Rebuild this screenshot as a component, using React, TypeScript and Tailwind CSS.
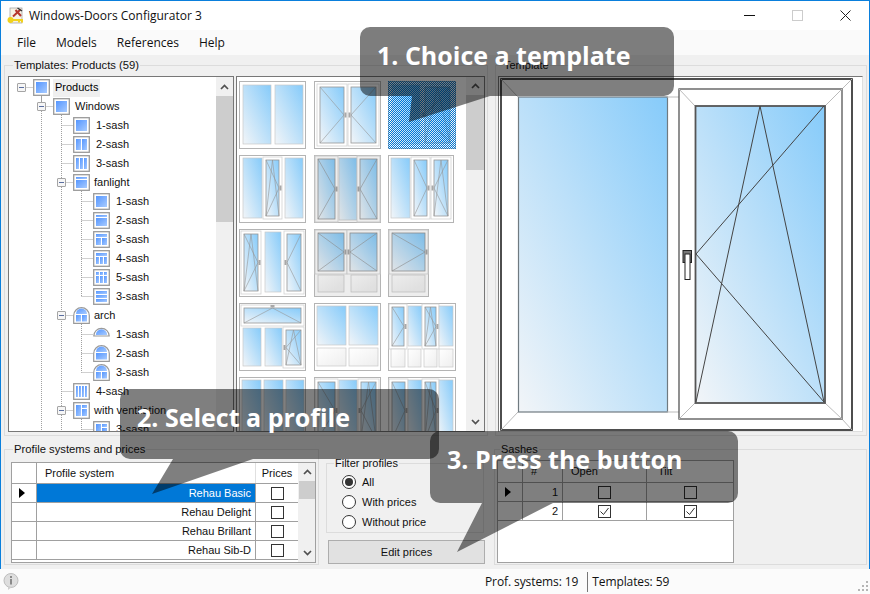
import React from "react";

type R = [number, number, number, number];
const sans = "font-['Liberation_Sans',Arial,sans-serif]";

/* ---------- tree ---------- */
const tree: { t: string; l: number; m?: boolean; k: string }[] = [
  { t: "Products", l: 0, m: true, k: "one" },
  { t: "Windows", l: 1, m: true, k: "one" },
  { t: "1-sash", l: 2, k: "one" },
  { t: "2-sash", l: 2, k: "v2" },
  { t: "3-sash", l: 2, k: "v3" },
  { t: "fanlight", l: 2, m: true, k: "fan" },
  { t: "1-sash", l: 3, k: "one" },
  { t: "2-sash", l: 3, k: "fan" },
  { t: "3-sash", l: 3, k: "f2" },
  { t: "4-sash", l: 3, k: "f3" },
  { t: "5-sash", l: 3, k: "f33" },
  { t: "3-sash", l: 3, k: "h3" },
  { t: "arch", l: 2, m: true, k: "arch3" },
  { t: "1-sash", l: 3, k: "arch1" },
  { t: "2-sash", l: 3, k: "arch2" },
  { t: "3-sash", l: 3, k: "arch3" },
  { t: "4-sash", l: 2, k: "v4" },
  { t: "with ventilation", l: 2, m: true, k: "vent" },
  { t: "3-sash", l: 3, k: "vent" },
];

const iconRects: Record<string, R[]> = {
  one: [[3, 3, 11, 11]],
  v2: [[3, 3, 5, 11], [9, 3, 5, 11]],
  v3: [[3, 3, 3, 11], [7, 3, 3, 11], [11, 3, 3, 11]],
  v4: [[3, 3, 2, 11], [6, 3, 2, 11], [9, 3, 2, 11], [12, 3, 2, 11]],
  fan: [[3, 3, 11, 2], [3, 6, 11, 8]],
  f2: [[3, 3, 11, 3], [3, 7, 5, 7], [9, 7, 5, 7]],
  f3: [[3, 3, 11, 3], [3, 7, 3, 7], [7, 7, 3, 7], [11, 7, 3, 7]],
  f33: [[3, 3, 3, 3], [7, 3, 3, 3], [11, 3, 3, 3], [3, 7, 3, 7], [7, 7, 3, 7], [11, 7, 3, 7]],
  h3: [[3, 3, 11, 3], [3, 7, 11, 3], [3, 11, 11, 3]],
  vent: [[3, 3, 5, 11], [9, 3, 5, 3], [9, 7, 5, 7]],
};

function TreeIcon({ k }: { k: string }) {
  if (k.startsWith("arch")) {
    return (
      <svg width="17" height="17" viewBox="0 0 17 17" className="relative shrink-0">
        {k === "arch1" ? (
          <>
            <path d="M.8 10 A7.7 7.7 0 0 1 16.2 10 Z" fill="#fff" stroke="#9a9a9a" strokeWidth="1.2" />
            <path d="M2.8 9 A5.7 5.7 0 0 1 14.2 9 Z" fill="url(#tb)" />
          </>
        ) : (
          <>
            <path d="M.7 16.3 V8.5 A7.8 7.8 0 0 1 16.3 8.5 V16.3 Z" fill="#fff" stroke="#9a9a9a" strokeWidth="1.2" />
            <path d="M3 7 A5.5 5.5 0 0 1 14 7 Z" fill="url(#tb)" />
            {k === "arch2" ? (
              <rect x="3" y="8" width="11" height="6.5" fill="url(#tb)" />
            ) : (
              <>
                <rect x="3" y="8" width="5" height="6.5" fill="url(#tb)" />
                <rect x="9" y="8" width="5" height="6.5" fill="url(#tb)" />
              </>
            )}
          </>
        )}
      </svg>
    );
  }
  return (
    <svg width="17" height="17" viewBox="0 0 17 17" className="relative shrink-0">
      <rect x=".7" y=".7" width="15.6" height="15.6" fill="#fff" stroke="#9a9a9a" strokeWidth="1.3" />
      {iconRects[k].map((r, i) => (
        <rect key={i} x={r[0]} y={r[1]} width={r[2]} height={r[3]} fill="url(#tb)" />
      ))}
    </svg>
  );
}

function TreeLines() {
  const d: string[] = [];
  tree.forEach((n, i) => {
    const y = 10.5 + i * 19;
    const x = 12.5 + n.l * 20;
    d.push(`M${x} ${y}H${x + 12}`);
    if (n.l > 0) {
      let j = i - 1;
      while (j >= 0 && tree[j].l >= n.l) j--;
      d.push(`M${x} ${j * 19 + 19}V${y}`);
    }
  });
  d.push("M32.5 20V356", "M52.5 40V356", "M72.5 340V356");
  return (
    <svg className="absolute left-0 top-0" width="200" height="356">
      <path d={d.join("")} stroke="#a0a0a0" strokeDasharray="1 1" fill="none" />
    </svg>
  );
}

function TreeRow({ t, l, m, k }: { t: string; l: number; m?: boolean; k: string }) {
  const pad = ["pl-[8px]", "pl-[28px]", "pl-[48px]", "pl-[68px]"][l];
  return (
    <div className={`relative flex h-[19px] items-center ${pad}`}>
      <div className="flex w-[16px] shrink-0 items-center">
        {m && (
          <div className="relative flex h-[9px] w-[9px] items-center justify-center rounded-[1px] border border-[#a5a5a5] bg-[#f6f6f6]">
            <div className="h-px w-[5px] bg-[#5a6ea0]" />
          </div>
        )}
      </div>
      <TreeIcon k={k} />
      {l === 0 ? (
        <span className="ml-[3px] flex h-[18px] items-center bg-[#efefef] px-[2px] text-black">{t}</span>
      ) : (
        <span className={`${m && l === 2 ? "ml-[4px]" : m ? "ml-[5px]" : "ml-[6px]"} whitespace-nowrap text-[#111]`}>{t}</span>
      )}
    </div>
  );
}

/* ---------- thumbnails ---------- */
type P = { r: R; y: "f" | "t" | "k" | "h" | "p"; side?: "l" | "r" };
const f = (x: number, y: number, w: number, h: number): P => ({ r: [x, y, w, h], y: "f" });
const pn = (x: number, y: number, w: number, h: number): P => ({ r: [x, y, w, h], y: "p" });
const t = (x: number, y: number, w: number, h: number, side: "l" | "r" = "r"): P => ({ r: [x, y, w, h], y: "t", side });
const k = (x: number, y: number, w: number, h: number, side: "l" | "r" = "r"): P => ({ r: [x, y, w, h], y: "k", side });
const hh = (x: number, y: number, w: number, h: number): P => ({ r: [x, y, w, h], y: "h" });

const thumbs: { w: number; dim?: boolean; sel?: boolean; panes: P[] }[] = [
  { w: 67, panes: [f(4, 4, 28, 59), f(36, 4, 28, 59)] },
  { w: 67, panes: [t(6, 6, 24, 56), t(37, 6, 25, 56, "l")] },
  { w: 68, sel: true, panes: [f(4, 4, 28, 59), k(37, 6, 25, 56, "l")] },
  { w: 67, panes: [f(4, 3, 19, 60), k(27, 5, 13, 56), f(46, 3, 18, 60)] },
  { w: 67, dim: true, panes: [t(4, 4, 17, 60), f(25, 3, 18, 62), t(46, 4, 17, 60, "l")] },
  { w: 66, panes: [f(3, 3, 19, 60), t(26, 5, 13, 56), k(46, 5, 14, 56, "l")] },
  { w: 67, panes: [k(5, 5, 14, 57), f(26, 3, 16, 60), t(48, 5, 14, 57, "l")] },
  { w: 67, dim: true, panes: [t(4, 4, 26, 38), t(36, 4, 27, 38, "l"), pn(4, 46, 26, 17), pn(37, 46, 26, 17)] },
  { w: 41, dim: true, panes: [t(4, 4, 33, 38), pn(4, 46, 33, 17)] },
  { w: 67, panes: [hh(5, 5, 57, 15), f(4, 25, 18, 38), f(26, 25, 17, 38), k(47, 27, 15, 35, "l")] },
  { w: 67, panes: [f(3, 3, 29, 39), f(35, 3, 29, 39), pn(3, 45, 29, 18), pn(35, 45, 29, 18)] },
  { w: 68, panes: [t(4, 4, 12, 39), f(20, 3, 14, 40), k(37, 4, 11, 39), f(51, 3, 14, 40), pn(3, 46, 14, 18), pn(20, 46, 13, 18), pn(36, 46, 13, 18), pn(51, 46, 14, 18)] },
  { w: 67, panes: [f(3, 3, 19, 60), f(25, 3, 19, 60), f(47, 3, 18, 60)] },
  { w: 67, panes: [t(4, 5, 17, 57), f(25, 3, 18, 60), k(47, 5, 15, 57, "l")] },
  { w: 68, panes: [t(4, 5, 13, 57), f(20, 3, 14, 60), k(37, 5, 11, 57), f(51, 3, 14, 60)] },
];

function Pane({ p }: { p: P }) {
  const [x, y, w, h] = p.r;
  if (p.y === "f" || p.y === "p") {
    return (
      <rect x={x} y={y} width={w} height={h} fill={p.y === "p" ? "url(#pan)" : "url(#gl)"} stroke="#c8c8c8" strokeWidth=".7" />
    );
  }
  const tipx = p.side === "l" ? x : x + w;
  const hingex = p.side === "l" ? x + w : x;
  const my = y + h / 2;
  const line = "#969696";
  return (
    <>
      <rect x={x - 3} y={y - 3} width={w + 6} height={h + 6} fill="#fff" stroke="#d2d2d2" strokeWidth=".8" />
      <rect x={x} y={y} width={w} height={h} fill="url(#gl)" stroke={line} strokeWidth=".8" />
      {p.y === "h" ? (
        <path d={`M${x} ${y + h}L${x + w / 2} ${y}L${x + w} ${y + h}`} stroke={line} strokeWidth=".6" fill="none" />
      ) : (
        <path d={`M${hingex} ${y}L${tipx} ${my}L${hingex} ${y + h}`} stroke={line} strokeWidth=".6" fill="none" />
      )}
      {p.y === "k" && (
        <path d={`M${x} ${y + h}L${x + w / 2} ${y}L${x + w} ${y + h}`} stroke={line} strokeWidth=".6" fill="none" />
      )}
      {p.y === "h" ? (
        <rect x={x + w / 2 - 2} y={y - 3} width="4" height="2.5" fill="#a8a8a8" />
      ) : (
        <rect x={p.side === "l" ? x - 2.5 : x + w + 0.5} y={my - 2.5} width="2" height="5" fill="#a8a8a8" />
      )}
    </>
  );
}

function Thumb({ w, dim, sel, panes }: { w: number; dim?: boolean; sel?: boolean; panes: P[] }) {
  return (
    <svg width={w} height="68" viewBox={`0 0 ${w} 68`} className="block">
      <rect x=".5" y=".5" width={w - 1} height="67" fill="#fff" stroke="#b4b4b4" />
      {panes.map((p, i) => (
        <Pane key={i} p={p} />
      ))}
      {dim && <rect x="1" y="1" width={w - 2} height="66" fill="#000" opacity=".07" />}
      {sel && <rect x="0" y="0" width={w} height="68" fill="url(#dither)" />}
    </svg>
  );
}

/* ---------- small widgets ---------- */
function Chev({ up }: { up?: boolean }) {
  return (
    <svg width="9" height="6" viewBox="0 0 9 6">
      <path d={up ? "M1 5 L4.5 1.5 L8 5" : "M1 1 L4.5 4.5 L8 1"} stroke="#505050" strokeWidth="1.7" fill="none" />
    </svg>
  );
}

function Check({ on }: { on?: boolean }) {
  return (
    <div className="flex h-[13px] w-[13px] items-center justify-center border border-[#333] bg-white">
      {on && (
        <svg width="11" height="11" viewBox="0 0 11 11">
          <path d="M1.5 5.5 L4.5 8.5 L9.5 2" stroke="#333" strokeWidth="1" fill="none" />
        </svg>
      )}
    </div>
  );
}

function Radio({ on, label }: { on?: boolean; label: string }) {
  return (
    <div className="flex h-[20px] items-center">
      <div className="flex h-[14px] w-[14px] items-center justify-center rounded-full border border-[#333] bg-white">
        {on && <div className="h-[8px] w-[8px] rounded-full bg-[#333]" />}
      </div>
      <span className="ml-[6px] text-[#111]">{label}</span>
    </div>
  );
}

const profiles = ["Rehau Basic", "Rehau Delight", "Rehau Brillant", "Rehau Sib-D"];

function Callout({ pos, w, h, d, text, textPos }: { pos: string; w: number; h: number; d: string; text: string; textPos: string }) {
  return (
    <div className={`absolute ${pos}`}>
      <svg width={w} height={h} className="block">
        <path d={d} fill="#000" opacity=".5" />
      </svg>
      <span className={`absolute whitespace-nowrap font-['Open_Sans',sans-serif] text-[25px] leading-[32px] font-bold text-white ${textPos}`}>
        {text}
      </span>
    </div>
  );
}

export default function App() {
  return (
    <div className={`relative h-[594px] w-[870px] overflow-hidden bg-white text-[11px] ${sans}`}>
      <svg className="absolute h-0 w-0">
        <defs>
          <linearGradient id="gl" x1="0" y1="1" x2="1" y2="0">
            <stop offset="0" stopColor="#f2f5f8" />
            <stop offset="1" stopColor="#86cbfa" />
          </linearGradient>
          <linearGradient id="pan" x1="0" y1="0" x2="1" y2="1">
            <stop offset="0" stopColor="#fff" />
            <stop offset="1" stopColor="#eeeeee" />
          </linearGradient>
          <linearGradient id="tb" x1="0" y1="0" x2="1" y2="1">
            <stop offset="0" stopColor="#5596ff" />
            <stop offset="1" stopColor="#a8cbff" />
          </linearGradient>
          <pattern id="dither" width="2" height="2" patternUnits="userSpaceOnUse">
            <rect x="0" y="0" width="1" height="1" fill="#0078d7" />
            <rect x="1" y="1" width="1" height="1" fill="#0078d7" />
          </pattern>
        </defs>
      </svg>

      <div className="flex h-full flex-col border-t border-[#0a7fdc]">
        {/* title bar */}
        <div className="flex h-[29px] shrink-0 items-center border-x border-[#0a7fdc] pl-[6px]">
          <svg width="17" height="18" viewBox="0 0 17 18">
            <rect x="3" y="1" width="12" height="15" fill="#f6f1e4" stroke="#9a9a9a" strokeWidth=".7" />
            <path d="M6 9.5 L13.5 2.5 M14 9 L8.5 3" stroke="#b5352c" strokeWidth="2" />
            <path d="M10.5 1 L15 4" stroke="#333" strokeWidth="1.3" />
            <circle cx="3.5" cy="13" r="3" fill="#f2d21c" />
            <path d="M5 13 H15 V15.5 M12 13 V15.5" stroke="#f2d21c" strokeWidth="2" fill="none" />
          </svg>
          <span className="ml-[5px] font-['Open_Sans',sans-serif] text-[12px] text-[#111]">Windows-Doors Configurator 3</span>
          <div className="ml-auto flex items-center pr-[18px]">
            <svg width="11" height="11" viewBox="0 0 11 11"><path d="M0 5.5H11" stroke="#111" /></svg>
            <svg width="11" height="11" viewBox="0 0 11 11" className="ml-[37px]"><rect x=".5" y=".5" width="10" height="10" fill="none" stroke="#cccccc" /></svg>
            <svg width="11" height="11" viewBox="0 0 11 11" className="ml-[37px]"><path d="M.5 .5L10.5 10.5M10.5 .5L.5 10.5" stroke="#222" /></svg>
          </div>
        </div>

        {/* menu */}
        <div className="flex h-[25px] shrink-0 items-center gap-[20px] border-x border-[#0a7fdc] bg-[#fafafa] pl-[16px] font-['Open_Sans',sans-serif] text-[12px] text-[#111]">
          <span>File</span>
          <span>Models</span>
          <span>References</span>
          <span>Help</span>
        </div>

        {/* body */}
        <div className="flex h-[514px] shrink-0 flex-col border-x border-[#0a7fdc] bg-[#f0f0f0] pl-[3px] pr-[2px] pt-[3px]">
          <div className="flex h-[378px] shrink-0">
            <fieldset className="flex h-[378px] w-[484px] min-w-0 gap-[2px] border border-[#dcdcdc] pl-[3px] pt-[4px]">
              <legend className="ml-[5px] px-px text-[11.25px] leading-[14px] text-[#111]">Templates: Products (59)</legend>
              <div className="relative flex h-[356px] w-[226px] shrink-0 overflow-hidden border border-[#777] bg-white">
                <div className="relative min-w-0 flex-1 overflow-hidden pt-[1px]">
                  <TreeLines />
                  {tree.map((n, i) => (
                    <TreeRow key={i} {...n} />
                  ))}
                </div>
                <div className="flex w-[17px] shrink-0 flex-col items-center bg-[#f0f0f0]">
                  <div className="flex h-[19px] items-center"><Chev up /></div>
                  <div className="h-[126px] w-full bg-[#cdcdcd]" />
                </div>
              </div>
              <div className="flex h-[356px] w-[249px] shrink-0 overflow-hidden border border-[#777] bg-white">
                <div className="min-w-0 flex-1 overflow-hidden pl-[2px] pt-[4px]">
                  <div className="grid grid-cols-[75px_74px_68px] gap-y-[6px]">
                    {thumbs.map((th, i) => (
                      <Thumb key={i} {...th} />
                    ))}
                  </div>
                </div>
                <div className="flex w-[18px] shrink-0 flex-col items-center bg-[#f0f0f0]">
                  <div className="flex h-[18px] items-center"><Chev up /></div>
                  <div className="h-[75px] w-full bg-[#cdcdcd]" />
                  <div className="mt-auto flex h-[18px] items-center"><Chev /></div>
                </div>
              </div>
            </fieldset>
            <fieldset className="ml-[7px] h-[378px] w-[372px] min-w-0 border border-[#dcdcdc] pl-[2px] pt-[4px]">
              <legend className="ml-[5px] px-px leading-[14px] text-[#111]">Template</legend>
              <div className="h-[356px] w-[365px] border-b border-l border-r border-t border-b-[#dedede] border-l-[#777] border-r-[#dedede] border-t-[#777] bg-white">
                <svg width="363" height="354" viewBox="0 0 363 354" className="block">
                  <g transform="translate(-499 -77)">
                    <rect x="501" y="79" width="351" height="351" fill="#fff" stroke="#222" strokeWidth="1.6" />
                    <path d="M501 79L518 97M852 79L842 89M501 430L518 412M852 430L842 419" stroke="#bbb" />
                    <rect x="518.5" y="97" width="149" height="315" fill="url(#gl)" stroke="#707a80" strokeWidth="1.2" />
                    <path d="M667 97H679M667 412H679" stroke="#bbb" />
                    <rect x="679" y="89" width="163" height="330" fill="#fff" stroke="#555" strokeWidth="1.3" />
                    <path d="M679 89L695 106M842 89L825 106M679 419L695 403M842 419L825 403" stroke="#bbb" />
                    <rect x="695.5" y="106" width="129.5" height="297" fill="url(#gl)" stroke="#555" strokeWidth="1.8" />
                    <path d="M696 402L760 106L824 402M824 106L696 254L824 402" stroke="#444" strokeWidth="1" fill="none" />
                    <rect x="683" y="250.5" width="8.5" height="12" fill="#777" stroke="#222" />
                    <rect x="685" y="254" width="5" height="25.5" fill="#fff" stroke="#222" />
                  </g>
                </svg>
              </div>
            </fieldset>
          </div>

          <div className="mt-[6px] flex">
            {/* profile systems */}
            <fieldset className="h-[123px] w-[315px] shrink-0 border border-[#dcdcdc] pl-[6px] pt-[6px]">
              <legend className="ml-[2px] px-px text-[11.25px] leading-[14px] text-[#111]">Profile systems and prices</legend>
              <div className="flex h-[101px] w-[305px] overflow-hidden border border-[#a0a0a0] bg-white">
                <div className="min-w-0 flex-1">
                  <div className="flex h-[21px] border-b border-[#a0a0a0]">
                    <div className="w-[25px] shrink-0 border-r border-[#a0a0a0]" />
                    <div className="flex w-[219px] shrink-0 items-center border-r border-[#e0e0e0] pl-[8px] pt-[1px] text-[#111]">Profile system</div>
                    <div className="flex flex-1 items-center justify-center pt-[1px] text-[#111]">Prices</div>
                  </div>
                  {profiles.map((p, i) => (
                    <div key={p} className="flex h-[19px] border-b border-[#a0a0a0]">
                      <div className="flex w-[25px] shrink-0 items-center justify-center border-r border-[#a0a0a0]">
                        {i === 0 && (
                          <svg width="6" height="10" viewBox="0 0 6 10" className="ml-[-4px]"><path d="M0 0L6 5L0 10Z" fill="#000" /></svg>
                        )}
                      </div>
                      <div className={`flex w-[219px] shrink-0 items-center justify-end border-r border-[#a0a0a0] pr-[4px] ${i === 0 ? "bg-[#0078d7] text-white" : "text-[#111]"}`}>{p}</div>
                      <div className="flex flex-1 items-center justify-center"><Check /></div>
                    </div>
                  ))}
                </div>
                <div className="flex w-[17px] shrink-0 flex-col items-center border-l border-[#f0f0f0] bg-[#f0f0f0]">
                  <div className="flex h-[18px] items-center"><Chev up /></div>
                  <div className="h-[18px] w-full bg-[#cdcdcd]" />
                  <div className="mt-auto flex h-[18px] items-center"><Chev /></div>
                </div>
              </div>
            </fieldset>

            {/* filter + button */}
            <div className="ml-[7px] flex w-[159px] shrink-0 flex-col pt-[14px]">
              <fieldset className="h-[77px] w-[158px] border border-[#dcdcdc] text-[#111]">
                <legend className="ml-[7px] px-px leading-[14px]">Filter profiles</legend>
                <div className="mt-[2px] pl-[15px]">
                  <Radio on label="All" />
                  <Radio label="With prices" />
                  <Radio label="Without price" />
                </div>
              </fieldset>
              <div className="ml-[2px] mt-[7px] flex h-[24px] w-[157px] items-center justify-center border border-[#adadad] bg-[#e1e1e1] text-[#111]">Edit prices</div>
            </div>

            {/* sashes */}
            <fieldset className="ml-[9px] h-[123px] w-[373px] shrink-0 border border-[#dcdcdc] pl-[2px] pt-[4px]">
              <legend className="ml-[3px] px-px leading-[14px] text-[#111]">Sashes</legend>
              <div className="h-[103px] w-[237px] border border-[#a0a0a0] bg-white">
                <div className="flex h-[22px] border-b border-[#a0a0a0]">
                  <div className="w-[25px] border-r border-[#a0a0a0]" />
                  <div className="flex w-[40px] items-center border-r border-[#a0a0a0] pl-[8px] text-[#111]">#</div>
                  <div className="flex w-[84px] items-center border-r border-[#a0a0a0] pl-[8px] text-[#111]">Open</div>
                  <div className="flex flex-1 items-center pl-[11px] text-[#111]">Tilt</div>
                </div>
                {[1, 2].map((n) => (
                  <div key={n} className="flex h-[19px] border-b border-[#a0a0a0]">
                    <div className="flex w-[25px] items-center justify-center border-r border-[#a0a0a0]">
                      {n === 1 && (
                        <svg width="6" height="10" viewBox="0 0 6 10" className="ml-[-4px]"><path d="M0 0L6 5L0 10Z" fill="#000" /></svg>
                      )}
                    </div>
                    <div className="flex w-[40px] items-center justify-end border-r border-[#a0a0a0] pr-[4px] text-[#111]">{n}</div>
                    <div className="flex w-[84px] items-center justify-center border-r border-[#a0a0a0]"><Check on={n === 2} /></div>
                    <div className="flex flex-1 items-center justify-center"><Check on={n === 2} /></div>
                  </div>
                ))}
              </div>
            </fieldset>
          </div>
        </div>

        {/* status bar */}
        <div className="flex min-h-0 flex-1 items-center bg-[#fbfbfb] pl-[3px] font-['Open_Sans',sans-serif] text-[12px] text-[#111]">
          <svg width="16" height="17" viewBox="0 0 16 17">
            <circle cx="8" cy="7.5" r="7" fill="#dedede" stroke="#bdbdbd" />
            <path d="M5 13 L5 17 L9 14Z" fill="#cfcfcf" />
            <rect x="7" y="6" width="2" height="5.5" fill="#8a8a8a" />
            <rect x="7" y="3" width="2" height="2" fill="#8a8a8a" />
          </svg>
          <span className="ml-[466px] tracking-[-0.1px]">Prof. systems: 19</span>
          <div className="ml-[9px] h-[20px] w-px bg-[#777]" />
          <span className="ml-[4px] tracking-[-0.1px]">Templates: 59</span>
          <svg width="12" height="12" viewBox="0 0 12 12" className="ml-auto mr-[1px] mt-[8px]">
            <path d="M9 1h2v2H9zM5 5h2v2H5zM9 5h2v2H9zM1 9h2v2H1zM5 9h2v2H5zM9 9h2v2H9z" fill="#b5b5b5" />
          </svg>
        </div>
      </div>

      <Callout
        pos="left-[360px] top-[27px]"
        w={314}
        h={96}
        d="M10 0H304A10 10 0 0 1 314 10V59A10 10 0 0 1 304 69H130L49 95L52 69H10A10 10 0 0 1 0 59V10A10 10 0 0 1 10 0Z"
        text="1. Choice a template"
        textPos="left-[17px] top-[12px]"
      />
      <Callout
        pos="left-[120px] top-[389px]"
        w={319}
        h={106}
        d="M10 0H309A10 10 0 0 1 319 10V60A10 10 0 0 1 309 70H133L32 105L53 70H10A10 10 0 0 1 0 60V10A10 10 0 0 1 10 0Z"
        text="2. Select a profile"
        textPos="left-[17px] top-[12px]"
      />
      <Callout
        pos="left-[430px] top-[431px]"
        w={308}
        h={122}
        d="M10 0H298A10 10 0 0 1 308 10V62A10 10 0 0 1 298 72H123L27 121L52 72H10A10 10 0 0 1 0 62V10A10 10 0 0 1 10 0Z"
        text="3. Press the button"
        textPos="left-[17px] top-[12px]"
      />
    </div>
  );
}
